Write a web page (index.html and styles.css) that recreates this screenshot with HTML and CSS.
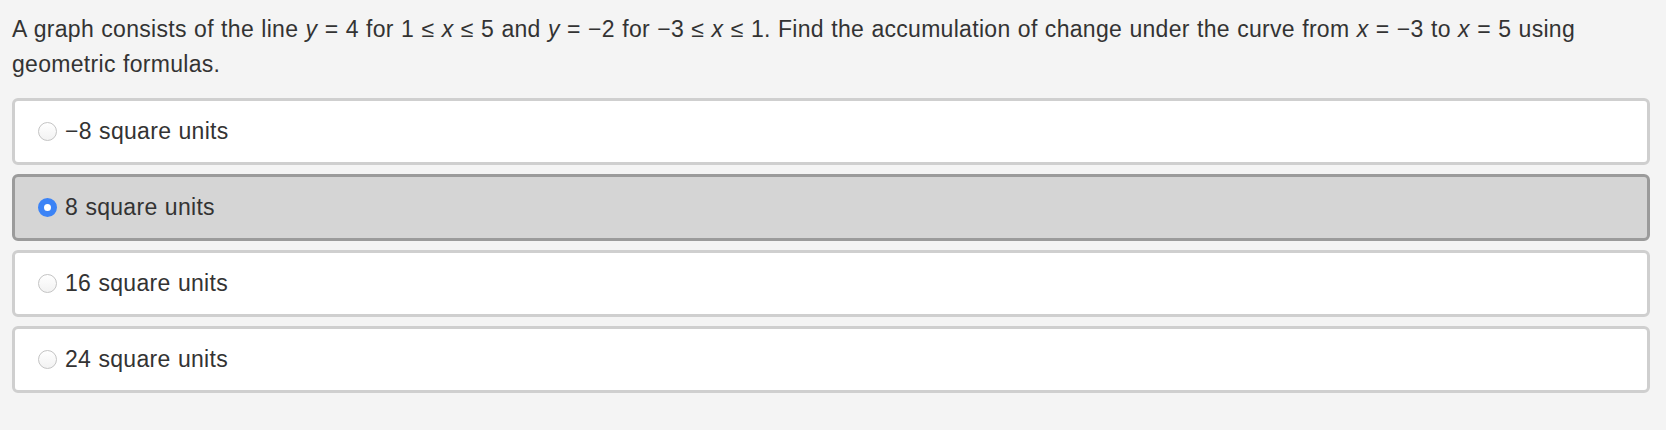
FILE: index.html
```html
<!DOCTYPE html>
<html lang="en">
<head>
    <meta charset="UTF-8">
    <title>Question</title>
    <link rel="stylesheet" href="styles.css">
</head>
<body>
    <div class="question">
        <p class="prompt">A graph consists of the line <i>y</i> = 4 for 1 ≤ <i>x</i> ≤ 5 and <i>y</i> = −2 for −3 ≤ <i>x</i> ≤ 1. Find the accumulation of change under the curve from <i>x</i> = −3 to <i>x</i> = 5 using geometric formulas.</p>
        <div class="choices">
            <label class="choice"><input type="radio" name="answer"> <span>−8 square units</span></label>
            <label class="choice selected"><input type="radio" name="answer" checked> <span>8 square units</span></label>
            <label class="choice"><input type="radio" name="answer"> <span>16 square units</span></label>
            <label class="choice"><input type="radio" name="answer"> <span>24 square units</span></label>
        </div>
    </div>
</body>
</html>
```
FILE: styles.css
```css
body {
    margin: 0;
    background-color: #f4f4f4;
    font-family: "Liberation Sans", Arial, sans-serif;
    color: #333;
    letter-spacing: 0.3px;
    word-spacing: 0.6px;
}
.question {
    padding: 12px 16px 0 12px;
}
.prompt {
    margin: 0 0 16px 0;
    font-size: 23px;
    line-height: 35px;
}
.choices {
    display: flex;
    flex-direction: column;
    gap: 9px;
}
.choice {
    display: flex;
    align-items: center;
    gap: 8px;
    height: 67px;
    box-sizing: border-box;
    padding-left: 23px;
    background-color: #fff;
    border: 3px solid #cfcfcf;
    border-radius: 6px;
    font-size: 23px;
}
.choice.selected {
    background-color: #d5d5d5;
    border-color: #9b9b9b;
}
.choice input {
    appearance: none;
    -webkit-appearance: none;
    margin: 0;
    width: 19px;
    height: 19px;
    border-radius: 50%;
    border: 1px solid #c4c4c4;
    background: linear-gradient(#ffffff, #f2f2f2);
    box-sizing: border-box;
    flex-shrink: 0;
}
.choice input:checked {
    border: 6px solid #3b83f6;
    background: #fff;
}
```
